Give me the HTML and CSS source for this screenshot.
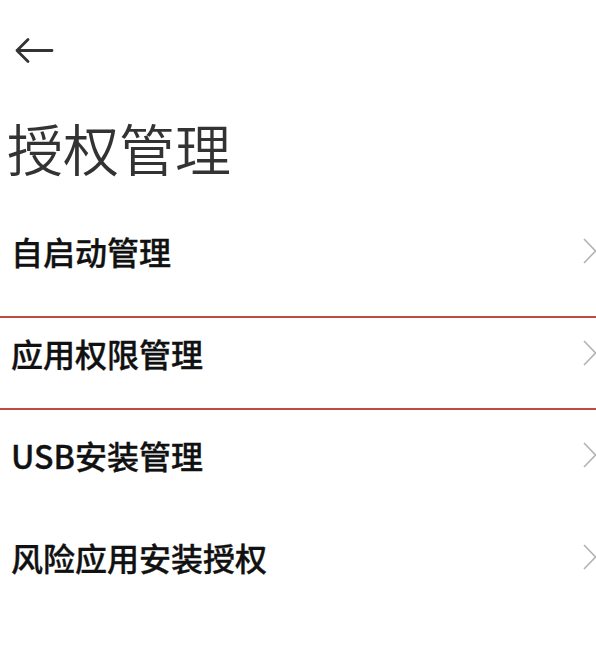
FILE: index.html
```html
<!DOCTYPE html>
<html lang="zh-CN">
<head>
<meta charset="utf-8">
<title>授权管理</title>
<link rel="stylesheet" href="styles.css">
</head>
<body>
<div class="page">
  <div class="topbar">
    <svg class="back" width="40" height="27" viewBox="0 0 40 27" aria-hidden="true">
      <path d="M3 13.5 H38 M14 2.5 L3 13.5 L14 24.5" fill="none" stroke="#333" stroke-width="2.8" stroke-linecap="round" stroke-linejoin="round"/>
    </svg>
  </div>
  <h1 class="title">授权管理</h1>
  <ul class="list">
    <li class="row"><span class="label">自启动管理</span><svg class="chev" width="13" height="26" viewBox="0 0 13 26"><path d="M1 1 L12.5 13 L1 25" fill="none" stroke="#b3b3b3" stroke-width="1.6"/></svg></li>
    <li class="row row-marked"><span class="label">应用权限管理</span><svg class="chev" width="13" height="26" viewBox="0 0 13 26"><path d="M1 1 L12.5 13 L1 25" fill="none" stroke="#b3b3b3" stroke-width="1.6"/></svg></li>
    <li class="row"><span class="label">USB安装管理</span><svg class="chev" width="13" height="26" viewBox="0 0 13 26"><path d="M1 1 L12.5 13 L1 25" fill="none" stroke="#b3b3b3" stroke-width="1.6"/></svg></li>
    <li class="row"><span class="label">风险应用安装授权</span><svg class="chev" width="13" height="26" viewBox="0 0 13 26"><path d="M1 1 L12.5 13 L1 25" fill="none" stroke="#b3b3b3" stroke-width="1.6"/></svg></li>
  </ul>
</div>
</body>
</html>
```
FILE: styles.css
```css
html, body {
  margin: 0;
  padding: 0;
  background: #fff;
}
body {
  font-family: "Noto Sans CJK SC", "Noto Sans", sans-serif;
  overflow: hidden;
}
.page {
  width: 596px;
  height: 655px;
}
.topbar {
  height: 100px;
  display: flex;
  align-items: center;
  padding-left: 14px;
}
.back {
  display: block;
}
.title {
  margin: 0;
  height: 100px;
  line-height: 94px;
  font-size: 56px;
  font-weight: 350;
  color: #333;
  padding-left: 7px;
}
.list {
  list-style: none;
  margin: 0;
  padding: 0;
}
.row {
  position: relative;
  height: 102px;
  display: flex;
  align-items: center;
  justify-content: space-between;
  padding-left: 11px;
}
.label {
  font-size: 32px;
  font-weight: 500;
  color: #111;
  line-height: 1;
  -webkit-text-stroke: 0.35px #111;
}
.chev {
  display: block;
  flex: none;
}
.row-marked::after {
  content: "";
  position: absolute;
  left: 0;
  right: 0;
  top: 14px;
  height: 90px;
  border-top: 2px solid #c24a46;
  border-bottom: 2px solid #c24a46;
  pointer-events: none;
}
```
